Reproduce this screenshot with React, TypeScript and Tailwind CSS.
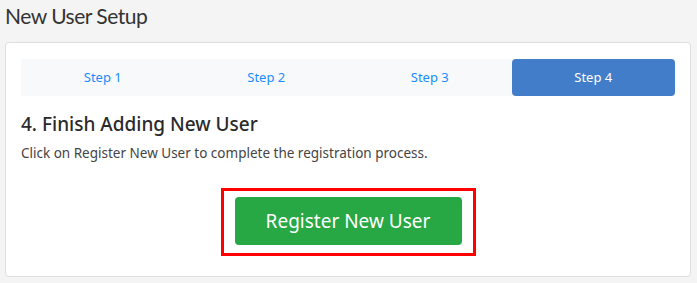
const steps = ['Step 1', 'Step 2', 'Step 3', 'Step 4'];

export default function App() {
  const active = 3;
  return (
    <div className="w-[697px] h-[283px] bg-[#f4f4f4] px-[5px] pt-[1px] font-['Noto_Sans',sans-serif]">
      <h1 className="text-[21px] leading-[30px] h-[41px] tracking-[-0.5px] text-[#333] font-['Lato',sans-serif]">New User Setup</h1>
      <div className="w-[686px] h-[235px] bg-white border border-[#dedede] rounded-[4px] px-[15px] pt-[16px]">
        {/* Step tabs */}
        <div className="flex bg-[#f8f9fa] h-[37px]">
          {steps.map((s, i) => (
            <div
              key={s}
              className={
                i === active
                  ? 'flex-1 flex items-center justify-center rounded-[4px] bg-[#427dc9] text-white text-[13px]'
                  : 'flex-1 flex items-center justify-center text-[#1a8cff] text-[13px]'
              }
            >
              {s}
            </div>
          ))}
        </div>

        <h2 className="mt-[16px] text-[19px] leading-[25px] font-medium text-[#2a2a2a]">4. Finish Adding New User</h2>
        <p className="mt-[7px] text-[13.5px] leading-[19px] text-[#444]">
          Click on Register New User to complete the registration process.
        </p>

        <div className="flex justify-center mt-[25px]">
          <div className="border-[3px] border-[#ff0000] px-[11px] pt-[6px] pb-[8px]">
            <button className="w-[227px] h-[48px] rounded-[4px] bg-[#28a745] text-white text-[19px]">
              Register New User
            </button>
          </div>
        </div>
      </div>
    </div>
  );
}
